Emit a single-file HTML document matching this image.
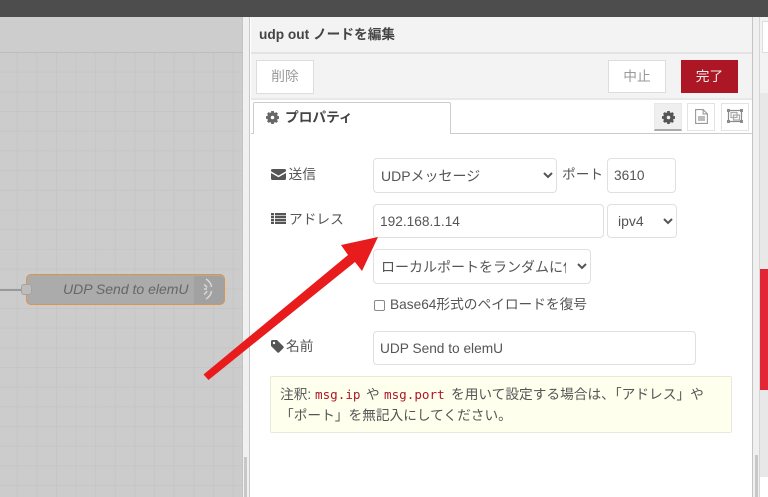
<!DOCTYPE html>
<html lang="ja"><head><meta charset="utf-8"><style>
html,body{margin:0;padding:0;background:#fff}
body{position:relative;width:768px;height:497px;overflow:hidden;font-family:"Liberation Sans","Noto Sans CJK JP",sans-serif;font-size:13.7px;color:#555}
div,span,select,input{position:absolute;box-sizing:border-box}
.f{background:#fff;border:1px solid #e0e0e0;border-radius:4px;color:#555;font:13.7px "Liberation Sans","Noto Sans CJK JP",sans-serif;margin:0}
select.f{font-size:14px;padding:0 8px 0 3px;appearance:auto}
input.f{padding:0 6px}
.btn{background:#fff;border:1px solid #ddd;text-align:center;line-height:32px;color:#999}
.lb{white-space:nowrap;line-height:20px}
.tb{background:#fff;border:1px solid #e3e3e3;width:28px;height:28px;top:103px}
.c{font:12.6px "DejaVu Sans Mono","Liberation Mono",monospace;color:#ad1625;white-space:nowrap;line-height:20px}
</style></head><body>
<!-- canvas -->
<div style="left:0;top:17px;width:242px;height:480px;background-color:#cdcdcd"></div>
<div style="left:0;top:52px;width:242px;height:445px;background-color:#cccccc;background-image:linear-gradient(to right,#c6c6c6 1px,transparent 1px),linear-gradient(to bottom,#c6c6c6 1px,transparent 1px);background-size:19.65px 19.7px;background-position:-3px 0"></div>
<div style="left:0;top:52px;width:242px;height:1px;background:#bdbdbd"></div>
<div style="left:0;top:0;width:768px;height:17px;background:#4d4d4d"></div>
<!-- node -->
<div style="left:0;top:288.500px;width:26px;height:2px;background:#999"></div>
<div style="left:26px;top:274px;width:199px;height:31px;background:#ababab;border:1.5px solid #d9944f;border-radius:5px"></div>
<div style="left:193.500px;top:275.500px;width:30px;height:28px;background:#a1a1a1;border-radius:0 4px 4px 0"></div>
<svg style="position:absolute;left:199px;top:276px" width="20" height="27" fill="none" stroke="#d8d8d8" stroke-width="1.500"><path d="M7 3q5 3 5.500 8M12.500 15q-.5 5-5.500 8M5 8.500q2 1 3 3M8 15q-1 2-3 3.500M5 13h3"/></svg>
<div style="left:21px;top:284px;width:11px;height:11px;background:#bdbdbd;border:1px solid #a3a3a3;border-radius:3px"></div>
<div class="lb" style="left:63px;top:279px;font-size:14px;font-style:italic;color:#666">UDP Send to elemU</div>
<!-- panel gutter -->
<div style="left:242px;top:17px;width:8px;height:480px;background:#f0f0f0;border-left:1px solid #c4c4c4;border-right:1px solid #c8c8c8"></div>
<div style="left:244px;top:457px;width:3px;height:40px;background:#c8c8c8"></div>
<!-- panel -->
<div style="left:250px;top:17px;width:502px;height:480px;background:#fff"></div>
<div style="left:251px;top:17px;width:501px;height:82px;background:#f3f3f3"></div>
<div style="left:251px;top:52px;width:501px;height:2px;background:#e3e3e3"></div>
<div style="left:251px;top:98px;width:501px;height:2px;background:#e8e8e8"></div>
<div class="lb" style="left:259px;top:25px;font-weight:bold;color:#444">udp out ノードを編集</div>
<div class="btn" style="left:256px;top:60px;width:58px;height:34px">削除</div>
<div class="btn" style="left:608px;top:60px;width:58px;height:33px">中止</div>
<div class="btn" style="left:681px;top:60px;width:57px;height:33px;background:#ad1625;border-color:#ad1625;color:#eee">完了</div>
<!-- tabs -->
<div style="left:251px;top:133px;width:501px;height:1px;background:#ccc"></div>
<div style="left:253px;top:102px;width:198px;height:32px;background:#fff;border:1px solid #ccc;border-bottom:0;border-radius:2px 2px 0 0"></div>
<svg style="position:absolute;left:266px;top:111px" width="13" height="13" viewBox="0 0 24 24"><circle cx="12" cy="12" r="6.500" fill="none" stroke="#666" stroke-width="6.500"/><path d="M12 0v6M12 18v6M0 12h6M18 12h6M3.500 3.500l4.500 4.500M16 16l4.500 4.500M20.500 3.500L16 8M8 16l-4.500 4.500" stroke="#666" stroke-width="5"/></svg>
<div class="lb" style="left:285px;top:108px;font-weight:bold;color:#444">プロパティ</div>
<div class="tb" style="left:653.500px;background:#efefef;border-color:#e8e8e8;border-bottom:2px solid #aaa"></div>
<svg style="position:absolute;left:661.500px;top:110.500px" width="13" height="13" viewBox="0 0 24 24"><circle cx="12" cy="12" r="6.500" fill="none" stroke="#555" stroke-width="6.500"/><path d="M12 0v6M12 18v6M0 12h6M18 12h6M3.500 3.500l4.500 4.500M16 16l4.500 4.500M20.500 3.500L16 8M8 16l-4.500 4.500" stroke="#555" stroke-width="5"/></svg>
<div class="tb" style="left:687px"></div>
<svg style="position:absolute;left:695px;top:109px" width="13" height="15" fill="none" stroke="#999" stroke-width="1.100"><path d="M.6.600h7.500l4.300 4.300v9.500H.6zM8.100.600v4.300h4.300"/><rect x="3" y="7" width="7" height="5" fill="#bbb" stroke="none"/></svg>
<div class="tb" style="left:721px"></div>
<svg style="position:absolute;left:727px;top:109px" width="16" height="14" fill="none" stroke="#8c8c8c" stroke-width="1.200"><rect x="1.500" y="1.500" width="13" height="11"/><rect x="4" y="3.500" width="6" height="5" stroke="#aaa"/><rect x="6.500" y="6" width="6" height="5" stroke="#aaa"/><path d="M0 0h3v3H0zM13 0h3v3h-3zM0 11h3v3H0zM13 11h3v3h-3z" fill="#8c8c8c" stroke="none"/></svg>
<!-- rows -->
<svg style="position:absolute;left:270.500px;top:169px" width="15" height="11"><path d="M0 1.500Q0 0 1.500 0h12Q15 0 15 1.500V2.300L7.500 6.600 0 2.300zM0 4l7.500 4.300L15 4v5.500Q15 11 13.500 11h-12Q0 11 0 9.500z" fill="#555"/></svg>
<div class="lb" style="left:288.500px;top:165px">送信</div>
<select class="f" style="left:373px;top:158px;width:184px;height:35px"><option>UDPメッセージ</option></select>
<div class="lb" style="left:562px;top:165px">ポート</div>
<input class="f" style="left:607px;top:158px;width:69px;height:35px" value="3610">
<svg style="position:absolute;left:270.500px;top:213px" width="15" height="11" fill="#555"><path d="M0 0h3v2.200H0zM4 0h11v2.200H4zM0 2.900h3v2.200H0zM4 2.900h11v2.200H4zM0 5.900h3v2.200H0zM4 5.900h11v2.200H4zM0 8.800h3V11H0zM4 8.800h11V11H4z"/></svg>
<div class="lb" style="left:289px;top:210px">アドレス</div>
<input class="f" style="left:373px;top:204px;width:231px;height:34px" value="192.168.1.14">
<select class="f" style="left:607px;top:204px;width:70px;height:34px;padding-left:6px"><option>ipv4</option></select>
<select class="f" style="left:373px;top:249px;width:218px;height:35px"><option>ローカルポートをランダムに使用</option></select>
<div style="left:374px;top:299.500px;width:11px;height:11px;background:#fff;border:1px solid #888;border-radius:2px"></div>
<div class="lb" style="left:390px;top:295px">Base64形式のペイロードを復号</div>
<svg style="position:absolute;left:270.500px;top:340px" width="13" height="13"><path d="M0 1.500Q0 0 1.500 0H6L12.500 6.500Q13 7.500 12.500 8L8 12.500Q7 13 6.500 12.500L0 6z" fill="#555"/><circle cx="3" cy="3" r="1.200" fill="#fff"/></svg>
<div class="lb" style="left:286px;top:337px">名前</div>
<input class="f" style="left:373px;top:331px;width:323px;height:34px" value="UDP Send to elemU">
<div style="left:270px;top:376px;width:462px;height:57px;background:#ffffee;border:1px solid #e8e8dc;border-radius:2px"></div>
<div class="lb" style="left:280px;top:385px">注釈:</div>
<div class="c" style="left:315px;top:385px">msg.ip</div>
<div class="lb" style="left:366px;top:385px">や</div>
<div class="c" style="left:384px;top:385px">msg.port</div>
<div class="lb" style="left:451px;top:385px">を用いて設定する場合は、「アドレス」や</div>
<div class="lb" style="left:280px;top:406px">「ポート」を無記入にしてください。</div>
<!-- right gutter -->
<div style="left:752px;top:17px;width:8px;height:480px;background:#f0f0f0;border-left:1px solid #c4c4c4;border-right:1px solid #d4d4d4"></div>
<div style="left:755px;top:455px;width:3px;height:42px;background:#c8c8c8"></div>
<div style="left:760px;top:17px;width:8px;height:76px;background:#f3f3f3"></div>
<div style="left:762px;top:21px;width:6px;height:32px;background:#fff;border:1px solid #ddd;border-right:0"></div>
<div style="left:760px;top:93px;width:8px;height:384px;background:#e8e8e8"></div>
<div style="left:760px;top:269px;width:8px;height:121px;background:#e22636"></div>
<div style="left:760px;top:477px;width:8px;height:20px;background:#fff"></div>
<!-- arrow -->
<svg style="position:absolute;left:0;top:0" width="768" height="497"><path d="M378 237L341 245 348 255 203.500 374.500 208.500 380 355 262 362 271z" fill="#e81c1c"/></svg>
</body></html>
